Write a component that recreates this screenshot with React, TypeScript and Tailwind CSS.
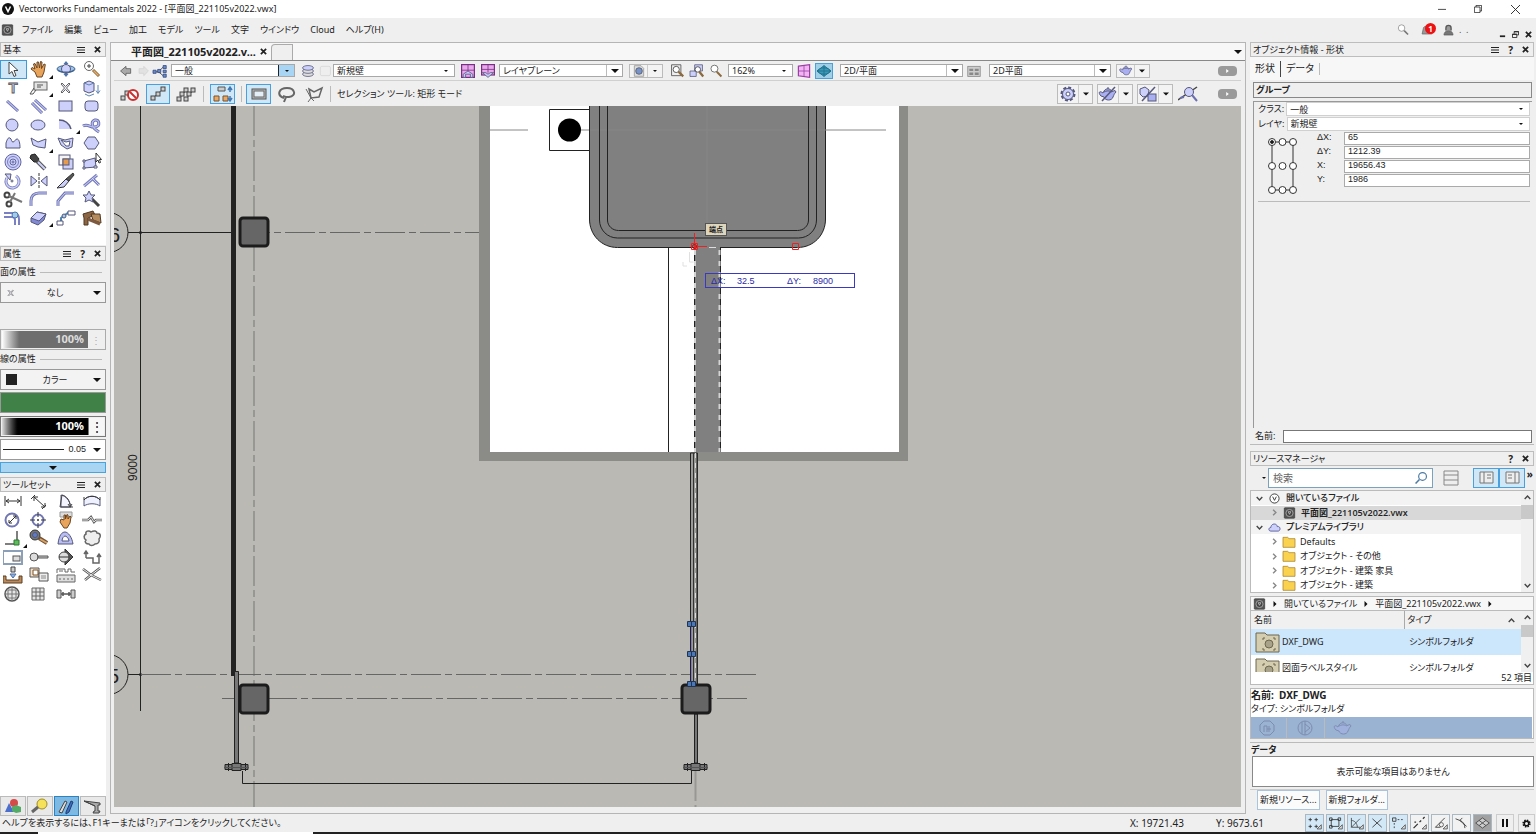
import React from 'react';
import { twMerge } from 'tailwind-merge';

type Tool = { name: string; icon: React.ReactNode; flyout?: boolean; active?: boolean };

const L = '#ccd0fa';
const D = '#55587a';

const G: React.FC<{ children: React.ReactNode; className?: string }> = ({ children, className }) => (
    <svg viewBox="0 0 20 18" className={twMerge('h-[18px] w-5 flex-none', className)} fill="none" stroke={D} strokeWidth="1" aria-hidden="true">
        {children}
    </svg>
);

const teapot = (
    <>
        <path d="M5 8C1 5 0 8 3 11l3 1c1 4 8 4 9 0 1-2 1-3 3-5l-1-1.500-3 1C12 3 8 3 6 6z" fill="#a9aff0" />
        <path d="M6 7c2-1.500 6-1.500 8 0M9 3h2" />
    </>
);

const sheet = (
    <>
        <rect x="2" y="1" width="16" height="16" rx="1" fill="#555" stroke="#333" />
        <circle cx="10" cy="9" r="5.500" stroke="#ccc" fill="#444" />
        <path d="M8 7l2 4 2-4z" stroke="#ddd" />
    </>
);

const basicTools: Tool[] = [
    { name: 'セレクション', active: true, icon: <path d="M6 2v12l3-2.500 2 5 2-1-2-5h4z" fill="#fff" stroke="#444" /> },
    {
        name: 'パン', flyout: true,
        icon: <path d="M6 12 2 9l1-1.500 3 1.500L4.500 4 6 3.500 8 8V2h1.500l1 6 1-6.500L13 2l-.5 6.500L15 4l1.300.5L15 12l-2 5H8z" fill="#e7a45a" stroke="#6b4420" />,
    },
    {
        name: 'フライオーバー',
        icon: (
            <>
                <ellipse cx="10" cy="9" rx="9" ry="3.500" fill="#9fc3e8" stroke="#3e6390" />
                <circle cx="10" cy="9" r="4.500" fill={L} />
                <path d="M10 1 7.500 4h5zM10 17l-2.500-3h5z" fill="#4f73a8" stroke="none" />
                <path d="M2 10c3 3 13 3 16 0" stroke="#3e6390" strokeWidth="1.500" />
            </>
        ),
    },
    {
        name: 'ズーム',
        icon: (
            <>
                <circle cx="7" cy="6" r="4.500" fill="#fff" stroke="#666" />
                <path d="M7 4v4M5 6h4" stroke="#444" />
                <path d="m11 10 6 6" stroke="#8a6030" strokeWidth="3" />
                <path d="m11.500 10.500 5 5" stroke="#e0b070" strokeWidth="1.500" />
            </>
        ),
    },
    {
        name: '文字',
        icon: <text x="10" y="14" textAnchor="middle" fontSize="15" fontWeight="bold" fontFamily="Liberation Sans" fill="#c3c6ea" stroke="#555" strokeWidth=".8">T</text>,
    },
    {
        name: '引出線', flyout: true,
        icon: (
            <>
                <rect x="5" y="3" width="13" height="8" fill="#e4e4e4" stroke="#666" />
                <path d="M8 6h6M8 8h4M5 9l-4 6h3l3-4" stroke="#555" />
            </>
        ),
    },
    { name: '2D基準点', icon: <path d="m5 5 3.500 4L5 13l1 1 3.500-3.500L13 14l1-1-3.500-4L14 5l-1-1-3.500 3.500L6 4z" fill="#e8e8f5" stroke="#666" /> },
    {
        name: 'シンボル',
        icon: (
            <>
                <path d="m2 4 5-2 5 2v8l-5 2-5-2z" fill={L} />
                <path d="m2 4 5 2 5-2M3 15l4 2 5-2M16 6v8m-2-2.500 2 3 2-3" stroke="#5d83b5" />
            </>
        ),
    },
    { name: '直線', icon: <><path d="m4 4 11 10" strokeWidth="3" stroke="#6468a0" /><path d="m4 4 11 10" stroke="#b3b8f0" strokeWidth="1.500" /></> },
    {
        name: 'ダブルライン',
        icon: (
            <>
                <path d="m3 6 10 10M6 3l11 10" strokeWidth="3" stroke="#6468a0" />
                <path d="m3 6 10 10M6 3l11 10" stroke="#b3b8f0" strokeWidth="1.500" />
            </>
        ),
    },
    { name: '四角形', icon: <rect x="3" y="4" width="13" height="10" fill={L} /> },
    { name: '隅の丸い四角形', icon: <rect x="3" y="4" width="13" height="10" rx="3" fill={L} /> },
    { name: '円', icon: <circle cx="9" cy="9" r="6" fill={L} /> },
    { name: '楕円', icon: <ellipse cx="9" cy="9" rx="7" ry="5" fill={L} /> },
    { name: '円弧', flyout: true, icon: <><path d="M3 4c6 0 10 3 12 9H3z" fill={L} stroke="none" /><path d="M3 4c6 0 10 3 12 9" strokeWidth="1.500" /></> },
    {
        name: 'フリーハンド',
        icon: (
            <>
                <path d="M1 10c5-3 7 2 12 1 6-1 4-8 0-7-5 2-3 8 4 12" strokeWidth="3" stroke="#6468a0" />
                <path d="M1 10c5-3 7 2 12 1 6-1 4-8 0-7-5 2-3 8 4 12" strokeWidth="1.500" stroke="#b3b8f0" />
            </>
        ),
    },
    { name: '曲線', icon: <path d="M3 14V9c1-3 2-6 4-5s1 4 3 4 2-3 4-3 3 4 3 9z" fill={L} /> },
    { name: '多角形', flyout: true, icon: <path d="m2 4 7 4 8-3-1 9-7-1-5-2z" fill={L} /> },
    { name: 'ダブルライン多角形', icon: <><path d="m2 4 7 2 8-2-1 9-5 2-6-4z" fill={L} /><path d="m5 6 5 2 4-1-1 5-3 0z" fill="#fff" /></> },
    { name: '正多角形', icon: <path d="m6 3 7 0 4 6-4 6H6L2 9z" fill={L} /> },
    {
        name: '渦巻き',
        icon: (
            <>
                <circle cx="10" cy="9" r="8" fill={L} stroke="#6468a0" />
                <circle cx="10" cy="9" r="5.500" stroke="#7a7fc0" />
                <circle cx="10" cy="9" r="3" stroke="#6468a0" />
                <circle cx="10" cy="9" r="1" stroke="#6468a0" />
            </>
        ),
    },
    {
        name: 'アイドロッパ',
        icon: <><path d="m2 2 4-1 4 5-2 3-3 0-4-4z" fill="#444" stroke="#222" /><path d="m8 8 8 8" stroke="#555" strokeWidth="4" /><path d="m9 9 7 7" stroke={L} strokeWidth="2" /></>,
    },
    {
        name: '領域',
        icon: <><rect x="3" y="2" width="11" height="10" fill="#f5f5f5" /><rect x="7" y="6" width="10" height="10" fill={L} /><rect x="7" y="6" width="6" height="6" fill="#e59a4c" /></>,
    },
    {
        name: '変形',
        icon: <><path d="m2 8 11-3 1 9-12 1z" fill={L} /><path d="M1 7h2v2H1zM12 13h3v2h-3zM1 14h2v2H1z" fill="#fff" /><path d="m14 0 0 9 2-2 1 3 1.500-.5-1-3h2z" fill="#fff" stroke="#333" /></>,
    },
    {
        name: '回転',
        icon: <><path d="M4 6a6.500 6.500 0 1 0 9-2" stroke="#7277b3" strokeWidth="3" /><path d="M4 6a6.500 6.500 0 1 0 9-2" stroke={L} strokeWidth="1.500" /><path d="m2 2 6 0-1 6z" fill={L} /><circle cx="9" cy="9" r="1" /></>,
    },
    { name: 'ミラー', icon: <><path d="m2 4 6 5-6 5zM18 4l-6 5 6 5z" fill={L} /><path d="M10 1v16" stroke="#333" strokeDasharray="3 1" /></> },
    { name: '切断', icon: <><path d="M1 16 10 7l3 2-5 6z" fill={L} stroke="#333" /><path d="m10 7 7-6 1 2-5 6z" fill="#555" stroke="#333" /></> },
    { name: 'トリミング', icon: <><path d="m2 14 13-11M10 6l7 7" strokeWidth="3" stroke="#7b80bb" /><path d="m2 14 13-11M10 6l7 7" stroke={L} /></> },
    { name: 'はさみ', icon: <><circle cx="4" cy="5" r="2.500" stroke="#444" strokeWidth="2" /><circle cx="6" cy="14" r="2.500" stroke="#444" strokeWidth="2" /><path d="m6 6 13 6M7 12l5-9" stroke="#777" strokeWidth="2" /></> },
    { name: 'フィレット', icon: <><path d="M2 16v-5c0-5 3-8 8-8h8" strokeWidth="3" stroke="#7277b3" /><path d="M2 16v-5c0-5 3-8 8-8h8" stroke={L} /></> },
    { name: '面取り', icon: <><path d="M2 16v-5l7-8h9" strokeWidth="3" stroke="#7277b3" /><path d="M2 16v-5l7-8h9" stroke={L} /></> },
    { name: 'ワンド', icon: <><path d="m10 9 7 7" stroke="#444" strokeWidth="3" /><path d="m7 1 2 4h4l-3 3 1 4-4-2-4 2 1-4-3-3h4z" fill={L} /></> },
    { name: 'オフセット', icon: <><path d="M1 4h9c4 0 6 2 6 6v6M1 8h8c2 0 3 1 3 3v5" stroke="#7b80c5" strokeWidth="2" /><circle cx="12" cy="6" r="3" fill="#a6cbe9" stroke="#477bad" /></> },
    { name: '消しゴム', flyout: true, icon: <><path d="m2 9 6-6 9 2-2 6-6 5-7-3z" fill="#8289d5" /><path d="m2 9 6-6 9 2-7 7z" fill={L} /></> },
    { name: '結合', icon: <><path d="M5 13V9l8-6" stroke="#4b87b5" strokeWidth="2" /><circle cx="8" cy="7" r="2" fill="#a6cbe9" /><path d="M12 2h7v4h-7zM1 12h6v4H1z" fill="#fff" /></> },
    { name: '属性マッピング', icon: <><path d="m1 5 10-3 2 4-7 3v7H2V9z" fill="#8c6544" stroke="#503822" /><path d="m9 5 9 0 1 9-8-3z" fill="#b48a5f" stroke="#503822" /><path d="m6 10 12 5" stroke="#7d5940" strokeWidth="3" /></> },
];

const dimTools: Tool[] = [
    { name: '縦横寸法', icon: <path d="M2 4v10M18 4v10M3 9h14M6 7 3 9l3 2M14 7l3 2-3 2" stroke="#333" /> },
    { name: '斜め寸法', icon: <path d="m2 7 4-4M13 17l4-4M5 5l11 10M5 9V5h4M16 11v4h-4" stroke="#333" /> },
    { name: '角度寸法', icon: <><path d="M5 15V3c5 1 9 6 10 12z" fill="#f5f5ff" /><path d="M4 15h13M4 15 6 3c5 1 8 6 8 11m-2-2 2 3 2-3" stroke="#444" /></> },
    { name: '円弧寸法', icon: <><path d="M2 8c4-5 12-5 16 0v6c-4-3-12-3-16 0z" fill="#f0f1ff" /><path d="M2 8c4-5 12-5 16 0M2 8V5M18 8V5" stroke="#333" /></> },
    { name: '直径寸法', icon: <><circle cx="9" cy="9" r="6.500" stroke="#7277b3" strokeWidth="2" /><path d="m6 12 7-7M6 9v3h3M10 5h3v3" stroke="#333" /></> },
    { name: '中心線', icon: <><circle cx="9" cy="9" r="5.500" stroke="#7277b3" strokeWidth="2" /><path d="M9 1v5M9 12v5M1 9h5M12 9h5M8 9h2M9 8v2" stroke="#333" /></> },
    { name: '測り', icon: <><path d="M4 1h12v5H4z" fill="#ddd" stroke="#999" /><path d="m5 8 3 1V4h1.500v4L11 3.500l1 .5v4l2-3 1 1-1 6-3 5H8l-4-6z" fill="#e7a45a" stroke="#6b4420" /></> },
    { name: '破断線', icon: <><path d="M0 9h6l3-3 3 5 2-2h6" stroke="#666" strokeWidth="2.500" /><path d="M0 9h6l3-3 3 5 2-2h6" stroke="#ddd" /></> },
    { name: '基準線', flyout: true, icon: <><path d="M2 15h12M14 2v12" stroke="#555" strokeWidth="1.500" /><path d="M11 11h5v5h-5z" fill="#5fbb5f" stroke="#2b7a2b" /></> },
    { name: 'テープメジャー', icon: <><circle cx="6" cy="6" r="5" fill="#777" stroke="#333" /><circle cx="6" cy="6" r="2.500" fill="#5f7bc8" /><path d="m10 9 8 5" stroke="#6f5035" strokeWidth="4" /><path d="m11 10 7 4" stroke="#d7a466" strokeWidth="2" /></> },
    { name: '分度器', icon: <><path d="M2 15C3 6 6 3 9 3s7 5 8 12z" fill="#b9bdf2" /><path d="M6 12c0-3 2-5 3-5s4 2 4 5z" fill="#fff" /></> },
    { name: '雲マーク', icon: <path d="M4 5c-1-3 3-4 5-2 3-2 6-1 6 1 4 0 4 4 2 6 1 3-1 5-4 5-2 2-5 2-6 0-3 0-5-2-3-4-3-2-2-5 0-6z" fill="#eee" stroke="#666" strokeWidth="1.500" /> },
    { name: '図面枠', icon: <><rect x="0" y="3" width="19" height="13" fill="#fff" stroke="#8ba0b8" strokeWidth="2" /><rect x="10" y="8" width="7" height="5" fill="#ddd" stroke="#555" /></> },
    { name: '図番', icon: <><circle cx="5" cy="9" r="4" fill="#ddd" stroke="#555" /><path d="M9 8h10v2H9z" fill="#ccc" stroke="#555" /></> },
    { name: '断面マーカー', icon: <><path d="m9 1 8 8-8 8z" fill="#555" stroke="#333" /><circle cx="8" cy="9" r="5" fill="#ddd" stroke="#444" /><path d="M3 9h10" stroke="#333" /></> },
    { name: 'リンク線', icon: <path d="M4 10V4M2 6l2-3 2 3M4 10h7v5h6V7M15 9l2-3 2 3" stroke="#666" strokeWidth="1.500" /> },
    { name: 'スタンプ', icon: <><path d="M0 10h3v4h13v-4h3v7H0z" fill="#b98a5c" stroke="#5d3e22" /><path d="M8 1h4v5H8z" fill="#ccc" stroke="#444" /><path d="m7 8 3 4 3-4z" fill="#8fb1e0" stroke="#4b6ea8" /></> },
    { name: 'ビューポート', icon: <><path d="M1 2h9v9H1z" fill="#f2dfc8" stroke="#555" /><path d="M4 4h5v5H4z" fill="#fff" stroke="#7a5328" /><path d="M10 7h9v8h-9z" fill="#eee" stroke="#555" /><path d="M12 10h5M12 12h5" stroke="#888" /></> },
    { name: '縮尺バー', icon: <><path d="M1 9h18v7H1z" fill="#ddd" stroke="#666" /><path d="M1 7V3h8v3h3V3h3v3h4M4 12v2M8 12v2M12 12v2M16 12v2M3 5h4" stroke="#666" /></> },
    { name: '通り芯', icon: <><path d="m1 3 8 6 10 5M18 2 9 9 3 14" stroke="#555" strokeWidth="2.500" /><path d="m1 3 8 6 10 5M18 2 9 9 3 14" stroke="#eee" /></> },
    { name: '方位記号', icon: <><circle cx="9" cy="9" r="7" fill="#e5e5e5" stroke="#555" strokeWidth="1.500" /><path d="M9 2v14M2 9h14M5 5h8v8H5z" stroke="#777" /></> },
    { name: 'グリッド', icon: <path d="M3 3h12v12H3zM7 3v12M11 3v12M3 7h12M3 11h12" fill="#e5e5e5" stroke="#666" /> },
    { name: '連結寸法', icon: <><path d="M1 5h4v8H1zM15 5h4v8h-4z" fill="#ccc" stroke="#555" /><path d="M5 9h10M7 7v4M13 7v4" stroke="#555" strokeWidth="1.500" /></> },
];

const Tri: React.FC<{ className?: string }> = ({ className }) => (
    <svg viewBox="0 0 8 4" className={twMerge('h-1 w-2 flex-none', className)} aria-hidden="true"><path d="M0 0h8L4 4z" fill="#111" /></svg>
);

const Chevron: React.FC<{ up?: boolean; right?: boolean }> = ({ up, right }) => (
    <svg viewBox="0 0 10 10" className="h-[7px] w-[7px] flex-none" fill="none" stroke={right ? '#888' : '#444'} strokeWidth="2" aria-hidden="true">
        <path d={up ? 'm1 7 4-4 4 4' : right ? 'm3 1 4 4-4 4' : 'm1 3 4 4 4-4'} />
    </svg>
);

type SelProps = { label: string; value: string; className?: string; cell?: string };

const Sel: React.FC<SelProps> = ({ label, value, className, cell }) => (
    <div className={twMerge('relative flex h-[13px] flex-none border border-[#a8a8a8] bg-white', className)}>
        <select aria-label={label} className="w-full min-w-0 appearance-none bg-transparent pl-[3px] leading-[11px] outline-none">
            <option>{value}</option>
        </select>
        <span className={twMerge('pointer-events-none absolute inset-y-0 right-0 flex w-4 items-center justify-center', cell)}>
            <Tri className={cell?.includes('b-') || !cell ? 'scale-50' : ''} />
        </span>
    </div>
);

const PanelTitle: React.FC<{ title: string; menu?: boolean; help?: boolean }> = ({ title, menu, help }) => (
    <div className="flex h-[15px] flex-none items-center gap-[9px] border border-[#bdbdbd] bg-[#efefef] pl-[2px] pr-1">
        <h2 className="mr-auto whitespace-nowrap leading-3">{title}</h2>
        {menu && (
            <button aria-label="メニュー">
                <svg viewBox="0 0 8 8" className="h-2 w-2" stroke="#222"><path d="M0 1.500h8M0 4h8M0 6.500h8" /></svg>
            </button>
        )}
        {help && <button className="text-[10px] font-bold leading-3">?</button>}
        <button aria-label="閉じる">
            <svg viewBox="0 0 8 8" className="h-[7px] w-[7px]" stroke="#222" strokeWidth="2"><path d="m1 1 6 6M7 1 1 7" /></svg>
        </button>
    </div>
);

const Palette: React.FC<{ tools: Tool[]; className: string }> = ({ tools, className }) => (
    <div className={twMerge('grid grid-cols-4', className)}>
        {tools.map((tool) => (
            <button
                key={tool.name}
                aria-label={tool.name}
                className={twMerge('relative flex items-center justify-center pr-px', tool.active && 'border border-[#3d9bdc] bg-[#cfe7f7]')}
            >
                <G>{tool.icon}</G>
                {tool.flyout && (
                    <svg viewBox="0 0 4 4" className="absolute bottom-0 right-0 h-1 w-1"><path d="M4 0v4H0z" fill="#111" /></svg>
                )}
            </button>
        ))}
    </div>
);

const SectionLabel: React.FC<{ text: string }> = ({ text }) => (
    <div className="flex h-3 items-center gap-1 pr-1 leading-3">
        {text}
        <span className="h-px flex-1 bg-[#bbb]" />
    </div>
);

const Attributes = () => (
    <section className="flex flex-none flex-col pb-1">
        <PanelTitle title="属性" menu help />
        <div className="flex flex-col pt-[5px]">
            <SectionLabel text="面の属性" />
            <button className="mt-1 flex h-[21px] items-center border border-[#999] bg-[#f3f3f3] pl-1 pr-1">
                <G className="w-3">{basicTools[6].icon}</G>
                <span className="flex-1 text-center">なし</span>
                <Tri />
            </button>
            <div className="mt-[26px] flex h-[21px] border border-[#aaa] p-px">
                <div className="flex flex-1 items-center justify-end bg-linear-to-r from-white via-[#6e6e6e] via-20% to-[#6e6e6e] pr-1 font-['Noto_Sans'] text-[11px] font-bold text-[#ddd]">100%</div>
                <button aria-label="不透明度 面" className="w-4 text-[10px] leading-3 text-[#aaa]">⋮</button>
            </div>
            <div className="mt-[3px]"><SectionLabel text="線の属性" /></div>
            <button className="mt-1 flex h-[21px] items-center border border-[#999] bg-[#f3f3f3] pl-[5px] pr-1">
                <span className="h-[11px] w-[11px] bg-[#222]" />
                <span className="flex-1 text-center">カラー</span>
                <Tri />
            </button>
            <button aria-label="線の色" className="mt-[2px] h-[21px] border border-[#999] bg-[#3f8146]" />
            <div className="mt-[3px] flex h-[21px] border border-[#777] p-px">
                <div className="flex flex-1 items-center justify-end bg-linear-to-r from-[#ddd] via-black via-20% to-black pr-1 font-['Noto_Sans'] text-[11px] font-bold text-white">100%</div>
                <button aria-label="不透明度 線" className="w-4 border-l border-[#777] bg-[#f6f6f6] text-xs leading-3 text-black">⋮</button>
            </div>
            <button className="mt-[2px] flex h-[21px] items-center gap-1 border border-[#999] bg-white pl-[2px] pr-1 font-['Liberation_Sans']">
                <span className="h-px flex-1 bg-[#222]" />
                0.05
                <Tri className="ml-[3px]" />
            </button>
            <button aria-label="詳細" className="mt-[2px] flex h-[11px] items-center justify-center border border-[#4ba3dd] bg-[#a9d5f2]"><Tri /></button>
        </div>
    </section>
);

const setTabs: Tool[] = [
    { name: '3D', icon: <><circle cx="11" cy="6" r="4" fill="#d64a4a" stroke="none" /><path d="m2 15 4-9 5 9z" fill="#4b6fcb" stroke="none" /><path d="m9 10 4-2 5 2v5l-5 1-4-2z" fill="#54ab68" stroke="none" /></> },
    { name: '照明', icon: <><circle cx="12" cy="7" r="5" fill="#f5e25a" stroke="#a08d22" /><path d="m8 10-6 5" stroke="#666" strokeWidth="3" /></> },
    { name: '寸法/注釈', active: true, icon: <><path d="m3 15 6-11 2 1-5 11z" fill="#ddd" stroke="#444" /><path d="m10 15 5-11 2 1-4 10-3 2z" fill="#3e6ec0" stroke="#223c70" /></> },
    { name: 'ディテール', icon: <><path d="m1 4 16 2v2l-2 0v6h2l-1 2h-6l1-2h1V9z" fill="#aaa" stroke="#444" /><path d="m1 4 11 5" stroke="#444" /></> },
];

const LeftDock = () => (
    <aside className="flex w-[106px] flex-none flex-col">
        <PanelTitle title="基本" menu />
        <div className="mb-px flex-none bg-white pb-[18px] pt-[3px]">
            <Palette tools={basicTools} className="h-[167px] grid-rows-9" />
        </div>
        <Attributes />
        <PanelTitle title="ツールセット" menu />
        <div className="flex-1 bg-white">
            <Palette tools={dimTools} className="h-[111px] grid-rows-6" />
        </div>
        <div className="grid h-[18px] flex-none grid-cols-4 gap-px">
            {setTabs.map((tab) => (
                <button
                    key={tab.name}
                    aria-label={tab.name}
                    className={twMerge('flex items-center justify-center border border-[#bbb] bg-[#e9e9e9]', tab.active && 'border-[#2b83c4] bg-[#7db9e3]')}
                >
                    <G>{tab.icon}</G>
                </button>
            ))}
        </div>
    </aside>
);

const IconBtn: React.FC<{ name: string; className?: string; on?: boolean; children: React.ReactNode }> = ({ name, className, on, children }) => (
    <button aria-label={name} className={twMerge('flex flex-none items-center justify-center', on && 'border border-[#49a0dc] bg-[#cfe7f7]', className)}>
        {children}
    </button>
);

const SplitBtn: React.FC<{ name: string; className?: string; dot?: boolean; children: React.ReactNode }> = ({ name, className, dot, children }) => (
    <div className={twMerge('flex flex-none border border-[#bbb] bg-[#f3f3f3]', className)}>
        <button aria-label={name} className="flex flex-1 items-center justify-center">{children}</button>
        <button aria-label={name + ' 設定'} className="flex w-[15px] items-center justify-center border-l border-[#ccc]">
            <Tri className={dot ? 'scale-50' : 'w-[6px]'} />
        </button>
    </div>
);

const Pill = () => (
    <button aria-label="表示" className="mr-1 flex h-[10px] w-[19px] flex-none items-center justify-center rounded bg-[#9a9a9a]">
        <svg viewBox="0 0 4 6" className="h-1 w-[3px]"><path d="M0 0l4 3-4 3z" fill="#fff" /></svg>
    </button>
);

const Sep: React.FC<{ className?: string }> = ({ className }) => <span className={twMerge('h-4 w-px flex-none bg-[#bbb]', className)} />;

const node = (x: number, y: number) => <rect key={x + '-' + y} x={x} y={y} width="4" height="4" fill="#ccc" stroke="#444" />;

const ViewBar = () => (
    <div className="flex h-5 flex-none items-center overflow-hidden border-b border-[#d0d0d0] pl-[3px]">
        <IconBtn name="戻る" className="w-[18px]"><G className="h-[14px] w-4"><path d="m3 9 7-6v3h6v6h-6v3z" fill="#aaa" stroke="#555" /></G></IconBtn>
        <IconBtn name="進む" className="w-4"><G className="h-[14px] w-4"><path d="m17 9-6-6v3H5v6h6v3z" fill="#e2e2e2" stroke="#d2d2d2" /></G></IconBtn>
        <IconBtn name="クラス" className="w-[18px]">
            <G className="h-[14px] w-4"><path d="M4 10h6M8 10l6-6M8 10l6 5" stroke="#333" /><path d="M1 8h4v4H1zM7 7h4v4H7zM14 2h4v4h-4zM14 8h4v3h-4zM14 13h4v4h-4z" fill="#6d8bc6" stroke="#2d4580" /></G>
        </IconBtn>
        <Sel label="アクティブクラス" value="一般" className="ml-[2px] w-[124px]" cell="border-l border-b-[#58a8e0] bg-[#a9d5f5]" />
        <IconBtn name="レイヤ" className="ml-1 w-[18px]">
            <G className="h-[14px] w-4"><ellipse cx="10" cy="13" rx="7" ry="3" fill="#ddd" /><ellipse cx="10" cy="9" rx="7" ry="3" fill="#ddd" /><ellipse cx="10" cy="5" rx="7" ry="3" fill={L} /></G>
        </IconBtn>
        <IconBtn name="シートレイヤ" className="w-4"><G className="h-[14px] w-4"><rect x="4" y="3" width="13" height="12" rx="2" fill="#eee" stroke="#d4d4d4" /></G></IconBtn>
        <Sel label="アクティブレイヤ" value="新規壁" className="w-[122px]" />
        <IconBtn name="ビューを保存" className="ml-1 w-[18px]">
            <G className="h-4 w-4"><rect x="2" y="1" width="16" height="16" fill="#e9a8ea" stroke="#7a2f86" strokeWidth="1.500" /><path d="M10 1v8M2 8h16" stroke="#7a2f86" /><path d="M4 17v-4l6-4 6 4v4h-3v-4H7v4z" fill="#c7c9fb" /></G>
        </IconBtn>
        <IconBtn name="ビューを選択" className="ml-[2px] w-[18px]">
            <G className="h-4 w-4"><rect x="2" y="1" width="16" height="13" fill="#e9a8ea" stroke="#7a2f86" strokeWidth="1.500" /><path d="M10 1v10M2 7h16" stroke="#7a2f86" /><path d="M3 11h4l3 2 3-2h4l-7 6z" fill="#c7c9fb" /></G>
        </IconBtn>
        <Sel label="平面" value="レイヤプレーン" className="ml-[2px] w-[124px]" cell="border-l border-[#bbb]" />
        <SplitBtn name="レンダリング" dot className="ml-[6px] h-[14px] w-[34px]">
            <G className="h-3 w-4"><path d="M3 1h10l4 4v12H3z" fill="#ddd" stroke="#888" /><circle cx="10" cy="9" r="5" fill="#7894c6" stroke="#445" /></G>
        </SplitBtn>
        <IconBtn name="用紙全体" className="ml-1 w-5">
            <G className="h-[14px] w-4"><path d="M3 1h12v14H3z" fill="#eee" stroke="#444" /><circle cx="9" cy="7" r="4" fill="#fff" stroke="#333" /><path d="m12 10 6 6" stroke="#8c6a3d" strokeWidth="3" /></G>
        </IconBtn>
        <IconBtn name="図形全体" className="w-5">
            <G className="h-[14px] w-4"><path d="M7 1h10v8H7zM1 9h8v7H1z" fill={L} /><circle cx="11" cy="7" r="3.500" fill="#fff" stroke="#333" /><path d="m13 10 5 6" stroke="#8c6a3d" strokeWidth="3" /></G>
        </IconBtn>
        <IconBtn name="ズーム" className="w-[18px]">
            <G className="h-[14px] w-4"><circle cx="8" cy="6" r="4.500" fill="#fff" stroke="#555" /><path d="m11 10 6 6" stroke="#8c6a3d" strokeWidth="2.500" /></G>
        </IconBtn>
        <Sel label="縮尺" value="162%" className="ml-[3px] w-[65px]" />
        <IconBtn name="分割ビュー" className="ml-[2px] w-[18px]">
            <G className="h-4 w-4"><path d="m3 3 14-2v16L3 15z" fill="#f1b3f1" stroke="#9b3fa6" strokeWidth="1.500" /><path d="M10 2v14M3 9h14" stroke="#9b3fa6" /></G>
        </IconBtn>
        <IconBtn name="統合ビュー" on className="ml-[2px] h-4 w-[18px] bg-[#9fd0e8]">
            <G className="h-[14px] w-4"><path d="m10 2 9 7-9 7-9-7z" fill="#3a9ab8" stroke="#1c6c88" /><ellipse cx="10" cy="9" rx="8" ry="4" stroke="#1c6c88" /><path d="M1 9h18M10 2v14" stroke="#1c6c88" /></G>
        </IconBtn>
        <Sel label="ビュー" value="2D/平面" className="ml-[7px] w-[123px]" cell="border-l border-[#bbb]" />
        <IconBtn name="投影" className="ml-[2px] w-[18px]">
            <G className="h-[14px] w-4"><rect x="2" y="3" width="16" height="13" fill="#ccc" stroke="#888" /><path d="M4 6h5v3H4zM11 6h5v3h-5zM4 11h5v3H4zM11 11h5v3h-5z" fill="#888" stroke="none" /></G>
        </IconBtn>
        <Sel label="投影方法" value="2D平面" className="ml-[6px] w-[122px]" cell="border-l border-[#bbb]" />
        <SplitBtn name="背景レンダリング" className="ml-[5px] mr-auto h-[14px] w-[34px]"><G className="h-[13px] w-4">{teapot}</G></SplitBtn>
        <Pill />
    </div>
);

const ModeBar = () => (
    <div className="flex h-[25px] flex-none items-center overflow-hidden pl-[6px]">
        <IconBtn name="変形禁止" className="w-5"><G>{node(1, 11)}{node(5, 6)}<circle cx="13" cy="10" r="5" fill="#fff" stroke="#c93030" strokeWidth="2" /><path d="m10 7 6 6" stroke="#c93030" strokeWidth="2" /></G></IconBtn>
        <IconBtn name="単一変形" on className="ml-[6px] h-5 w-6"><G><path d="M5 13 15 4" />{node(3, 11)}{node(8, 7)}{node(13, 2)}</G></IconBtn>
        <IconBtn name="複数変形" className="ml-[5px] w-[22px]"><G><path d="m3 14 8-10M10 14l8-10" />{node(1, 12)}{node(4, 7)}{node(8, 3)}{node(8, 12)}{node(11, 7)}{node(15, 3)}</G></IconBtn>
        <Sep className="ml-[6px]" />
        <IconBtn name="接続" on className="ml-[6px] h-5 w-[25px]">
            <G><path d="M5 2h7v4H5z" fill="#ccc" stroke="#555" /><path d="M1 11h5v5H1zM10 11h5v5h-5z" fill="#e8a868" stroke="#7a5328" /><path d="M17 2v5m-2-2 2-3 2 3M17 16v-5m-2 2 2 3 2-3" stroke="#3f78b4" strokeWidth="1.500" /></G>
        </IconBtn>
        <Sep className="ml-[6px]" />
        <IconBtn name="矩形" on className="ml-1 h-5 w-[25px]"><G><rect x="3" y="4" width="14" height="10" fill="#bbb" stroke="#555" /><rect x="5" y="6" width="10" height="6" fill="#e3eef7" stroke="#666" /></G></IconBtn>
        <IconBtn name="なげなわ" className="ml-[6px] w-5"><G><path d="M7 13c-8-3-5-10 3-10s10 8 2 9H8m-2-1 3 1-2 5" stroke="#666" strokeWidth="2" /></G></IconBtn>
        <IconBtn name="多角形" className="ml-[7px] w-5"><G><path d="m5 4 5 3 8-4-3 9-8 1z" stroke="#666" strokeWidth="1.500" /><path d="m2 4 5 9-3 4M7 13l3 3" stroke="#666" /></G></IconBtn>
        <Sep className="ml-[6px]" />
        <span className="ml-[6px] mr-auto whitespace-nowrap">セレクション ツール: 矩形 モード</span>
        <SplitBtn name="設定" className="h-5 w-9"><G><circle cx="10" cy="9" r="6.500" fill={L} strokeWidth="2" strokeDasharray="3 2" /><circle cx="10" cy="9" r="5.500" fill={L} /><circle cx="10" cy="9" r="2" fill="#fff" /></G></SplitBtn>
        <SplitBtn name="表示" className="ml-1 h-5 w-9"><G>{teapot}<path d="M4 16 17 2" strokeWidth="1.500" /></G></SplitBtn>
        <SplitBtn name="図形" className="ml-1 h-5 w-9"><G><path d="m2 4 5-2 4 3-1 6-5 1-3-3z" fill={L} /><rect x="10" y="9" width="8" height="7" fill="#a9aff0" /><path d="M4 16 17 2" strokeWidth="1.500" /></G></SplitBtn>
        <IconBtn name="検索" className="ml-1 mr-[19px] w-[22px]"><G><path d="M0 15 19 2" stroke="#444" strokeWidth="1.500" /><circle cx="11" cy="7" r="4.500" fill={L} /><path d="m14 10 5 6M2 13l4-1" strokeWidth="2" stroke="#6c70b0" /></G></IconBtn>
        <Pill />
    </div>
);

const columns = [[254, 232], [254, 699], [696, 699]];

// plan coordinates: the top left corner of the view is at 114, 106
const Drawing = () => (
    <div className="relative flex-1 overflow-hidden bg-[#bab9b4]">
        <svg className="absolute inset-0 h-full w-full" fill="none" stroke="#222" role="img" aria-label="平面図">
            <g transform="translate(-114 -106)">
                <circle cx="108" cy="232.500" r="20" />
                <circle cx="108" cy="674.500" r="20" />
                <g fill="#222" stroke="none" fontFamily="Liberation Sans">
                    <text x="109" y="242" fontSize="20">6</text>
                    <text x="108" y="683" fontSize="20">5</text>
                    <text transform="translate(137 481) rotate(-90)" fontSize="12">9000</text>
                    <circle cx="140.500" cy="232.500" r="1.500" />
                    <circle cx="140.500" cy="674.500" r="1.500" />
                </g>
                <path d="M140.500 106v605M128 232.500h104M128 674.500h13" />
                <path d="M254 106v701M695.500 771v36" stroke="#979793" strokeWidth="2" strokeDasharray="30 4 7 4" />
                <path d="M240 232.500h250M141 674.500h617M222 698.500h529" stroke="#666" strokeDasharray="30 4 7 4" />
                <path d="M231 106h5v570h-5z" fill="#222" stroke="none" />
                <path d="M234.500 671.500h4V763h-4z" fill="#777" />
                <path d="M694.500 714v49h3v-49z" fill="#777" />
                <path d="M242.500 771v12.500h449V771" />
                {[224, 683].map((x) => (
                    <g key={x} fill="#777">
                        <path d={`M${x + 1} 764.500h23v5h-23z`} />
                        <path d={`M${x + 8} 763.500h9v7h-9zM${x + 4}.5 763v8M${x + 21}.5 763v8`} />
                        <path d={`M${x} 767.500h25`} stroke="#555" />
                    </g>
                ))}
                <path d="M479 106h11v346h409V106h9v355H479z" fill="#8b8b87" stroke="none" />
                <path d="M490 106h409v346H490z" fill="#fff" stroke="none" />
                <path d="M490 130h38M826 130h60" stroke="#888" />
                <path d="M549.500 109.500h41v41h-41z" fill="#fff" />
                <circle cx="569.500" cy="130" r="11.500" fill="#000" stroke="none" />
                <path d="M581 130h9" stroke="#888" />
                <path d="M589.500 100v119c0 16 12 28.500 28 28.500h180c16 0 28-12.500 28-28.500V100z" fill="#808080" />
                <path d="M590 130h236M707 106v124" stroke="#868686" />
                <path d="M599.500 100v120c0 10 8 18 18 18h181c10 0 18-8 18-18V100" />
                <path d="M607.500 100v120c0 6 5 10.500 11 10.500h179c6 0 11-4.500 11-10.500V100" />
                <path d="M668.500 247v205" />
                <path d="M694 247h26v205h-26z" fill="#808080" stroke="none" />
                <path d="M694.500 247v205M720.500 247v205" />
                <path d="M695 250v202M719.500 250v202" stroke="#d4d4d4" strokeWidth="2" strokeDasharray="5 6" />
                <path d="M690.500 453v232h7V453z" fill="#9a9a97" />
                <path d="M693.500 453v232M697 453v232" stroke="#333" />
                <path d="M695.500 453v232" stroke="#ddd" strokeDasharray="5 5" />
                <path d="M691.500 627v57" stroke="#7d78b8" />
                <path d="M709 247.500h7" stroke="#ddd" />
                <path d="M689.500 252v10h4M683 262v4h4" stroke="#e0e0e0" />
                <path d="M694.500 233v17M694.500 246.500H707M691.500 243.500h6v6h-6zM792.500 243.500h6v6h-6z" stroke="#f02020" />
                <circle cx="694.500" cy="246.500" r="2" stroke="#b01010" />
                {columns.map(([x, y]) => (
                    <rect key={x + '-' + y} x={x - 14} y={y - 14} width="28" height="28" rx="3" fill="#666" stroke="#1c1c1c" strokeWidth="3" />
                ))}
                {[621, 651, 681].map((y) => (
                    <path key={y} d={`M687.500 ${y}.5h8v5h-8zM691.500 ${y}v6`} fill="#4c79b5" stroke="#1f3557" />
                ))}
            </g>
        </svg>
        <span className="absolute left-[591px] top-[117px] border border-[#555] bg-[#ddd6bd] px-[3px] text-[7px] font-bold leading-[11px]">端点</span>
        <div className="absolute left-[591px] top-[167px] flex h-[15px] w-[150px] items-center border border-[#3b39c4] font-['Liberation_Sans'] leading-3 text-[#2b2aa8]">
            <span className="w-[31px] pl-[5px]">ΔX:</span>
            <span className="w-[50px]">32.5</span>
            <span className="w-[26px]">ΔY:</span>
            <span>8900</span>
        </div>
    </div>
);

const Workspace = () => (
    <main className="mx-1 flex min-w-0 flex-1 flex-col border border-[#b5b5b5] bg-[#f7f7f7]">
        <div className="flex h-[18px] flex-none items-end border-b border-[#888] pr-[3px]">
            <div className="flex h-[17px] items-center pl-5">
                <button className="whitespace-nowrap text-[11px] font-bold leading-4">平面図_221105v2022.v...</button>
                <button aria-label="タブを閉じる" className="ml-1 mr-1">
                    <svg viewBox="0 0 8 8" className="h-[7px] w-[7px]" stroke="#222" strokeWidth="2"><path d="m1 1 6 6M7 1 1 7" /></svg>
                </button>
            </div>
            <div className="h-4 w-[22px] rounded-tl border border-b-0 border-[#aaa] bg-[#efefef]" />
            <button aria-label="タブ一覧" className="mb-[6px] ml-auto"><Tri /></button>
        </div>
        <div className="flex flex-1 flex-col bg-[#efefef] pb-[6px] pl-[3px] pr-1">
            <ViewBar />
            <ModeBar />
            <Drawing />
        </div>
    </main>
);

const fields = [
    { label: 'ΔX:', value: '65' },
    { label: 'ΔY:', value: '1212.39' },
    { label: 'X:', value: '19656.43' },
    { label: 'Y:', value: '1986' },
];

const ObjectInfo = () => (
    <section className="flex flex-none flex-col">
        <PanelTitle title="オブジェクト情報 - 形状" menu help />
        <div role="tablist" className="flex h-[23px] items-center gap-[5px] bg-[#f7f7f7] pl-[5px] text-[10px]">
            <button role="tab" aria-selected="true">形状</button>
            <span className="h-4 w-px bg-[#444]" />
            <button role="tab" aria-selected="false">データ</button>
            <span className="h-3 w-px bg-[#bbb]" />
        </div>
        <div className="ml-[3px] mr-[2px] mt-[2px] flex h-4 items-center border border-[#888] pl-[2px] font-bold">グループ</div>
        <div className="ml-[3px] mr-[2px] mt-[3px] flex h-[327px] flex-col border-l border-t border-[#999] pl-1 pr-[2px]">
            <div className="flex h-[14px] items-center gap-[2px]">
                <span className="whitespace-nowrap">クラス:</span>
                <Sel label="クラス" value="一般" className="h-[14px] min-w-0 flex-1 border-[#d0d0d0]" />
            </div>
            <div className="flex h-[15px] items-center gap-[2px]">
                <span className="whitespace-nowrap">レイヤ:</span>
                <Sel label="レイヤ" value="新規壁" className="h-[14px] min-w-0 flex-1 border-[#d0d0d0]" />
            </div>
            <div className="flex border-b border-[#bbb] pb-[5px]">
                <svg viewBox="0 0 30 60" className="ml-[9px] mt-[5px] h-[60px] w-[30px] flex-none" fill="#fff" stroke="#333">
                    <path d="M5 6h21M5 54h21M5 6v48M26 6v48" fill="none" />
                    {[5, 15.5, 26].map((x) => [6, 30, 54].map((y) => <circle key={x + '-' + y} cx={x} cy={y} r="3.500" />))}
                    <circle cx="5" cy="6" r="1.500" fill="#111" />
                </svg>
                <div className="ml-5 flex-1">
                    {fields.map((f) => (
                        <label key={f.label} className="flex h-[14px] items-center font-['Liberation_Sans']">
                            <span className="w-[27px]">{f.label}</span>
                            <input defaultValue={f.value} className="h-[13px] min-w-0 flex-1 border border-[#aaa] bg-white px-[3px] outline-none" />
                        </label>
                    ))}
                </div>
            </div>
        </div>
        <label className="flex h-[17px] items-center gap-2 border-b border-[#bbb] pl-[5px] pr-[2px]">
            名前:
            <input className="h-[13px] min-w-0 flex-1 border border-[#777] bg-white px-1 outline-none" />
        </label>
    </section>
);

const Folder = () => (
    <G className="h-3 w-[14px]"><path d="M1 2h7l2 2h9v13H1z" fill="#fbd24f" stroke="#9c7418" /></G>
);

const folders = ['Defaults', 'オブジェクト - その他', 'オブジェクト - 建築 家具', 'オブジェクト - 建築'];

const ScrollBar: React.FC<{ thumb: string }> = ({ thumb }) => (
    <div className="flex w-3 flex-none flex-col items-center bg-[#f0f0f0] py-[3px]">
        <Chevron up />
        <span className={twMerge('mb-auto mt-1 w-3 bg-[#c9c9c9]', thumb)} />
        <Chevron />
    </div>
);

const SymbolFolder = () => (
    <svg viewBox="0 0 26 22" className="h-[22px] w-[26px] flex-none" fill="#d5cdb0" stroke="#6d674f">
        <path d="M1 2h9l2 2h12v17H1z" />
        <circle cx="14" cy="13" r="4" fill="#a9a28a" />
        <path d="M8 9V7h2M18 7h2v2M8 17v2h2M18 19h2v-2" fill="none" />
    </svg>
);

const ResourceManager = () => (
    <section className="mt-[6px] flex flex-1 flex-col">
        <PanelTitle title="リソースマネージャ" help />
        <div className="flex h-6 flex-none items-center pl-[10px] pr-px">
            <Tri className="scale-50" />
            <div className="flex h-5 w-[165px] items-center border border-[#7aa2bf] bg-white pl-1 pr-[3px]">
                <input aria-label="検索" placeholder="検索" className="min-w-0 flex-1 text-[10px] outline-none placeholder:text-[#666]" />
                <G className="h-[14px] w-4"><circle cx="12" cy="7" r="5" stroke="#4a7ba3" strokeWidth="1.500" /><path d="m8 11-5 5" stroke="#4a7ba3" strokeWidth="2" /></G>
            </div>
            <IconBtn name="表示形式" className="ml-auto h-5 w-5"><G><path d="M3 2h14v14H3zM3 6h14M3 11h14" fill="#eee" stroke="#888" /></G></IconBtn>
            <IconBtn name="左ペイン" on className="ml-3 h-5 w-[26px]"><G><path d="M4 3h13v11H4zM8 3v11M11 6h4M11 9h4" fill="#eee" stroke="#777" /></G></IconBtn>
            <IconBtn name="右ペイン" on className="h-5 w-[26px]"><G><path d="M4 3h13v11H4zM13 3v11M6 6h4M6 9h4" fill="#eee" stroke="#777" /></G></IconBtn>
            <button className="mb-2 pl-[2px] text-[10px] font-bold leading-3">»</button>
        </div>
        <div className="flex h-[103px] flex-none border border-[#bbb] bg-white leading-[14px]">
            <ul className="flex min-w-0 flex-1 flex-col justify-between whitespace-nowrap">
                <li className="flex h-[14px] items-center gap-[6px] bg-[#f3f3f3] pl-[5px] font-medium">
                    <Chevron />
                    <svg viewBox="0 0 12 12" className="h-[11px] w-[11px]" fill="#fff" stroke="#333"><circle cx="6" cy="6" r="5" /><path d="m4 4 2 4 2-4" /></svg>
                    開いているファイル
                </li>
                <li className="flex h-[14px] items-center gap-[5px] bg-[#d8d8d8] pl-5 font-medium">
                    <Chevron right />
                    <G className="h-3 w-[13px]">{sheet}</G>
                    <span className="font-['Open_Sans','Noto_Sans_CJK_JP',sans-serif] font-semibold">平面図_221105v2022.vwx</span>
                </li>
                <li className="flex h-[14px] items-center gap-[5px] bg-[#f3f3f3] pl-[5px] font-medium">
                    <Chevron />
                    <svg viewBox="0 0 14 10" className="h-[9px] w-[13px]" fill={L} stroke="#5a5e9c"><path d="M3 9c-3 0-3-4 0-4 0-5 7-5 7-1 4-1 4 5 1 5z" /></svg>
                    プレミアムライブラリ
                </li>
                {folders.map((name) => (
                    <li key={name} className="flex h-[14px] items-center gap-1 pl-5">
                        <Chevron right />
                        <Folder />
                        {name}
                    </li>
                ))}
            </ul>
            <ScrollBar thumb="h-[14px]" />
        </div>
        <nav className="mt-[3px] flex h-[15px] flex-none items-center gap-[6px] border border-[#bbb] bg-[#f7f7f7] pl-[2px] leading-3">
            <G className="h-3 w-[13px]">{sheet}</G>
            <Tri className="w-[6px] -rotate-90" />
            <a href="#files">開いているファイル</a>
            <Tri className="w-[6px] -rotate-90" />
            <a href="#plan">平面図_221105v2022.vwx</a>
            <Tri className="w-[6px] -rotate-90" />
        </nav>
        <div className="flex h-[61px] flex-none overflow-hidden border-x border-[#bbb] bg-white">
            <div className="flex-1 overflow-hidden">
                <table className="w-full table-fixed text-left">
                    <thead>
                        <tr className="h-[18px] bg-[#f0f0f0]">
                            <th className="w-[153px] border-r border-[#aaa] pl-[3px] font-normal">名前</th>
                            <th className="pl-[3px] font-normal"><span className="flex items-center justify-between pr-[6px]">タイプ<Chevron up /></span></th>
                        </tr>
                    </thead>
                    <tbody>
                        <tr className="h-[26px] bg-[#cce6fb]">
                            <td className="pl-1"><span className="flex items-center gap-px"><SymbolFolder />DXF_DWG</span></td>
                            <td className="pl-[5px]">シンボルフォルダ</td>
                        </tr>
                        <tr className="h-[26px]">
                            <td className="whitespace-nowrap pl-1"><span className="flex items-center gap-px"><SymbolFolder />図面ラベルスタイル</span></td>
                            <td className="pl-[5px]">シンボルフォルダ</td>
                        </tr>
                    </tbody>
                </table>
            </div>
            <ScrollBar thumb="h-3" />
        </div>
        <div className="h-[13px] flex-none border border-t-0 border-[#bbb] bg-white pr-px text-right leading-3">52 項目</div>
        <div className="mt-[3px] flex-none border border-[#bbb] bg-white leading-[13px]">
            <p className="text-[10px] font-bold leading-[13px]">名前:&nbsp; DXF_DWG</p>
            <p>タイプ: シンボルフォルダ</p>
            <div className="mr-px mt-[2px] flex h-[21px] items-center bg-[#9ab3d3] pl-[6px]">
                <G className="opacity-40"><path d="m3 6 4-4h6l4 4v6l-4 4H7l-4-4zM7 13V7h3v6M12 7v6M10 10h4" /></G>
                <Sep className="ml-[9px] mr-2 h-5" />
                <G className="opacity-40"><circle cx="10" cy="9" r="7" /><path d="M7 3v12M10 2v14M10 5l5 4-5 4" /></G>
                <Sep className="ml-[9px] mr-2 h-5" />
                <G className="opacity-40">{teapot}</G>
            </div>
        </div>
        <h3 className="mt-[3px] flex-none border-t border-[#bbb] pl-px font-bold leading-[13px]">データ</h3>
        <div className="ml-[2px] flex h-[31px] flex-none items-center justify-center border border-[#888] bg-white">表示可能な項目はありません</div>
        <div className="mt-[2px] flex gap-[6px] border-t border-[#ccc] pl-[7px]">
            <button className="h-5 whitespace-nowrap border border-[#a9c4dc] bg-[#fbfbfb] px-[2px]">新規リソース...</button>
            <button className="h-5 whitespace-nowrap border border-[#a9c4dc] bg-[#fbfbfb] px-[2px]">新規フォルダ...</button>
        </div>
    </section>
);

const menus = ['ファイル', '編集', 'ビュー', '加工', 'モデル', 'ツール', '文字', 'ウインドウ', 'Cloud', 'ヘルプ(H)'];

const snaps: Tool[] = [
    { name: 'グリッドスナップ', active: true, icon: <path d="M3 5h4M5 3v4M10 5h4M12 3v4M3 13h4M5 11v4M10 13h4M12 11v4" stroke="#333" /> },
    { name: '図形スナップ', active: true, icon: <path d="M5 5h9v8H5zM3 3h3v3H3zM13 3h3v3h-3zM3 12h3v3H3z" stroke="#333" /> },
    { name: '角度スナップ', active: true, icon: <path d="M4 3v11h11M4 14 14 4M4 6c4 0 7 4 7 8" stroke="#444" /> },
    { name: '交点スナップ', active: true, icon: <path d="m4 4 11 10M15 4 4 14" stroke="#333" /> },
    { name: 'スマートポイント', active: true, icon: <path d="M3 3h4v4H3zM9 5h2M13 5h2M5 9v2M5 13v2" stroke="#333" /> },
    { name: '定点スナップ', icon: <path d="m3 15 5-5M10 8l2-2M14 4l2-2M4 8h2" stroke="#333" strokeWidth="1.500" /> },
    { name: 'スマートエッジ', icon: <><path d="m4 14 11-11M4 14h6" stroke="#333" /><circle cx="11" cy="11" r="2.500" stroke="#555" /></> },
    { name: '接線スナップ', icon: <path d="m3 4 5 2c4 1 6 5 6 9M8 6l8 7M8 6l3-3" stroke="#333" /> },
    { name: '作業面', icon: <><path d="m2 9 8-6 8 6-8 6z" fill="#ccc" stroke="#444" /><path d="m6 6 8 6M14 6l-8 6" stroke="#444" /></> },
];

const resizer = <path d="m13 16 5-5v5z" fill="#ddd" stroke="#555" />;

export default function App() {
    return (
        <div className="flex min-h-screen flex-col bg-[#efefef] font-['Noto_Sans','Noto_Sans_CJK_JP',sans-serif] text-[9px] text-[#222] [font-feature-settings:'palt']">
            <header className="flex-none">
                <div className="flex h-[18px] items-center bg-white pl-[2px] pr-3">
                    <svg viewBox="0 0 12 12" className="mr-[5px] h-3 w-3"><circle cx="6" cy="6" r="6" fill="#111" /><path d="m3.500 3.500 2.500 5 2.500-5" fill="none" stroke="#fff" strokeWidth="1.500" /></svg>
                    <h1 className="mr-auto whitespace-nowrap">Vectorworks Fundamentals 2022 - [平面図_221105v2022.vwx]</h1>
                    <div className="flex items-center gap-7">
                        <button aria-label="最小化"><svg viewBox="0 0 10 10" className="h-2 w-2" stroke="#222"><path d="M0 5.500h10" /></svg></button>
                        <button aria-label="元に戻す"><svg viewBox="0 0 10 10" className="h-2 w-2" fill="none" stroke="#222"><path d="M.5 2.500h7v7h-7zM2.500 2.500v-2h7v7h-2" /></svg></button>
                        <button aria-label="終了" className="ml-px mr-1"><svg viewBox="0 0 10 10" className="h-[9px] w-[9px]" stroke="#222"><path d="m0 0 10 10M10 0 0 10" /></svg></button>
                    </div>
                </div>
                <nav className="flex h-6 items-center pr-1">
                    <G className="ml-px mr-2 h-4 w-[13px]">{sheet}</G>
                    <div className="mr-auto flex gap-[11px]">
                        {menus.map((m) => <button key={m} className="whitespace-nowrap leading-4">{m}</button>)}
                    </div>
                    <button aria-label="検索"><G className="h-3 w-[13px]"><circle cx="7" cy="6" r="5" fill="#fff" stroke="#777" /><path d="m11 10 6 6" stroke="#777" strokeWidth="2.500" /></G></button>
                    <button aria-label="通知" className="relative ml-[10px]">
                        <G className="h-[13px] w-[14px]"><path d="M3 14 5 5c1-3 9-3 10 0l2 9z" fill="#999" stroke="#666" /></G>
                        <span className="absolute -right-[2px] -top-px flex h-[11px] w-[11px] items-center justify-center rounded-full bg-[#ee1111] text-[8px] font-bold leading-[11px] text-white">1</span>
                    </button>
                    <button aria-label="ログイン" className="ml-2"><G className="h-[13px] w-[13px]"><path d="M6 9V5c0-5 8-5 8 0v4" fill="#999" stroke="#555" strokeWidth="2" /><path d="M3 16c0-9 14-9 14 0z" fill="#777" stroke="#555" /></G></button>
                    <span className="ml-1 w-10 text-[#555]">. &nbsp;.</span>
                    <div className="mt-2 flex gap-[6px]">
                        <button aria-label="図面を最小化"><svg viewBox="0 0 8 8" className="h-[7px] w-[7px]" stroke="#222" strokeWidth="2"><path d="M1 6h6" /></svg></button>
                        <button aria-label="図面を元に戻す"><svg viewBox="0 0 8 8" className="h-[7px] w-[7px]" fill="none" stroke="#222"><path d="M.5 3.500h5v4h-5zM2.500 3V.5h5v4H6M2.500 1h5M.5 4h5" /></svg></button>
                        <button aria-label="図面を閉じる"><svg viewBox="0 0 8 8" className="h-[7px] w-[7px]" stroke="#222" strokeWidth="2"><path d="m1 1 6 6M7 1 1 7" /></svg></button>
                    </div>
                </nav>
            </header>
            <div className="flex flex-1">
                <LeftDock />
                <Workspace />
                <aside className="flex w-[286px] flex-none flex-col pr-[2px]">
                    <ObjectInfo />
                    <ResourceManager />
                </aside>
            </div>
            <footer className="flex-none">
                <div className="flex h-[18px] items-center pl-[2px]">
                    <p className="mr-auto whitespace-nowrap">ヘルプを表示するには、F1キーまたは「?」アイコンをクリックしてください。</p>
                    <span className="w-[86px] text-[10px]">X: 19721.43</span>
                    <span className="w-[89px] text-[10px]">Y: 9673.61</span>
                    <div className="flex gap-[2px]">
                        {snaps.map((s, i) => (
                            <button
                                key={s.name}
                                aria-label={s.name}
                                className={twMerge(
                                    'flex h-[18px] w-[19px] items-center justify-center border border-[#aab8c4]',
                                    s.active ? 'bg-[#d3e8f7]' : i === 8 ? 'bg-[#a2a2a2]' : 'bg-[#f2f2f2]'
                                )}
                            >
                                <G className="h-4 w-[17px]">{s.icon}{i < 7 && i !== 3 && resizer}</G>
                            </button>
                        ))}
                    </div>
                    <button aria-label="一時停止" className="ml-1 flex h-[18px] w-[18px] items-center justify-center border border-[#ccc]"><svg viewBox="0 0 8 8" className="h-2 w-2"><path d="M1 0h2v8H1zM5 0h2v8H5z" fill="#111" /></svg></button>
                    <button aria-label="スナップ設定" className="ml-1 mr-px flex h-[18px] w-[17px] items-center justify-center border border-[#ccc]">
                        <svg viewBox="0 0 12 12" className="h-[9px] w-[9px]" fill="none" stroke="#111"><circle cx="6" cy="6" r="3" strokeWidth="2" /><circle cx="6" cy="6" r="4.500" strokeWidth="2" strokeDasharray="2 1.530" /></svg>
                    </button>
                </div>
                <div className="flex h-[2px]">
                    <span className="w-[38px] bg-[#222]" />
                    <span className="w-[275px] bg-white" />
                    <span className="flex-1 bg-[#222]" />
                </div>
            </footer>
        </div>
    );
}
